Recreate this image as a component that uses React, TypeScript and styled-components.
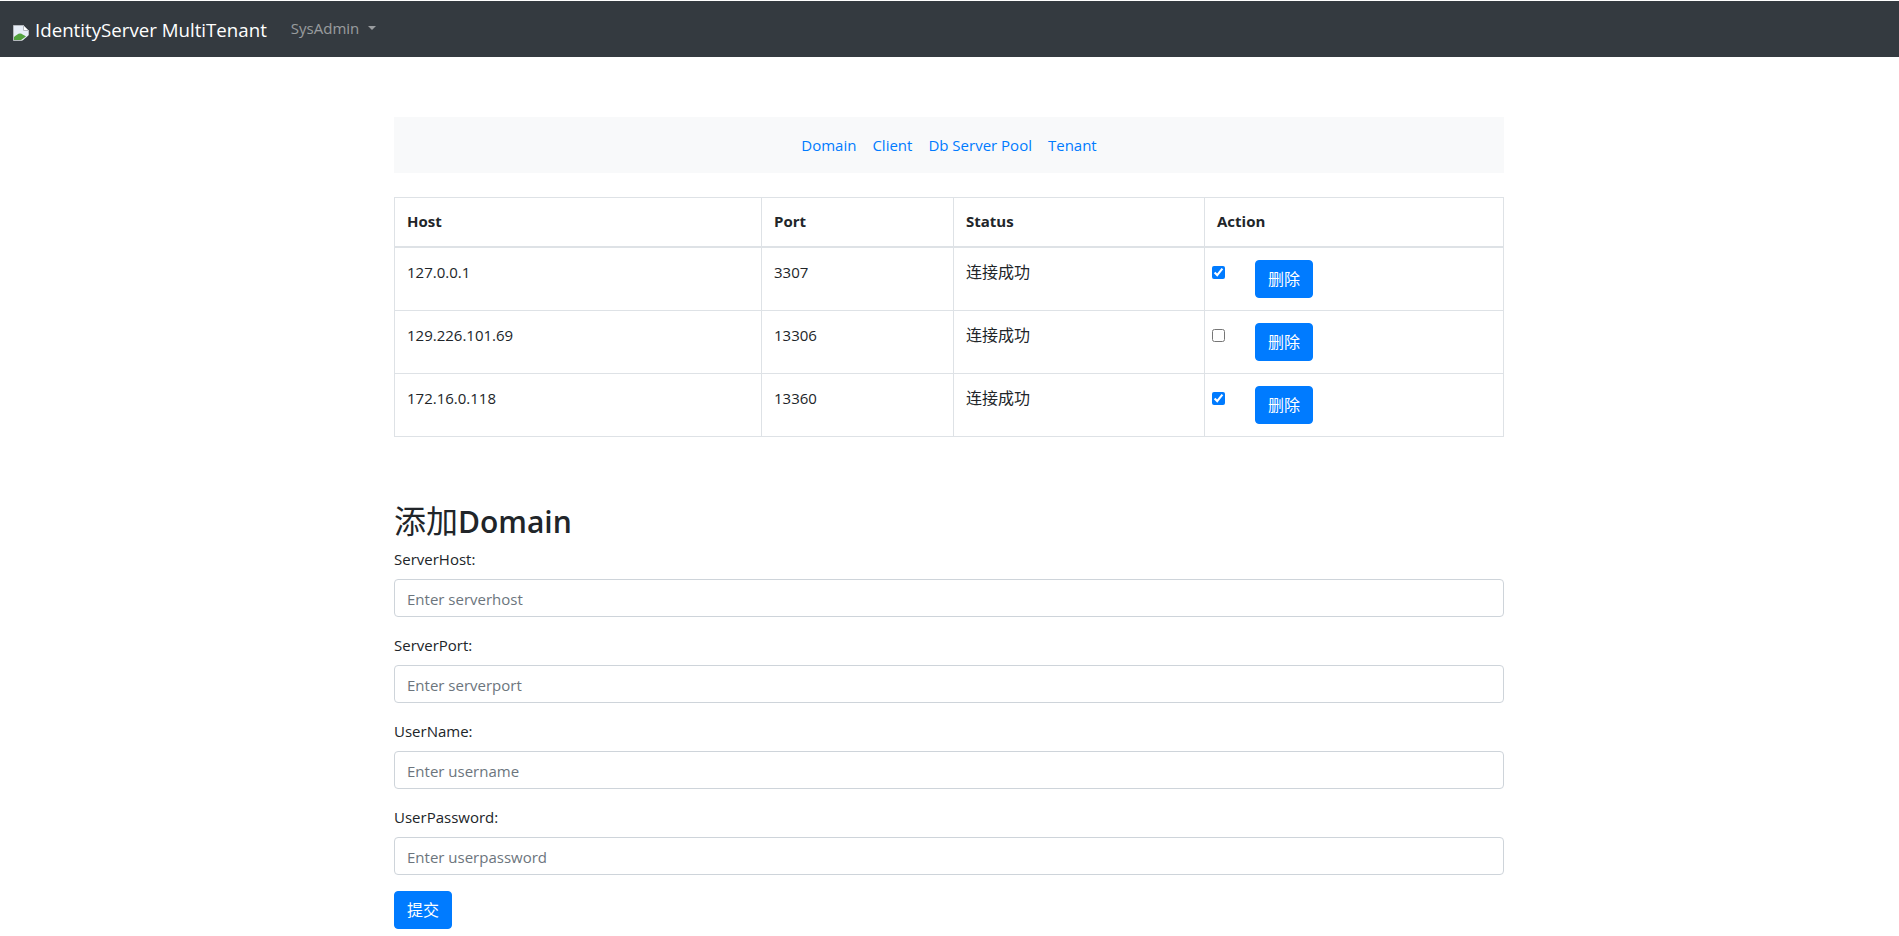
import React from "react";
import styled, { createGlobalStyle } from "styled-components";

const Global = createGlobalStyle`
  * { box-sizing: border-box; }
  html, body { margin: 0; padding: 0; background: #fff; }
  body {
    font-family: "Open Sans", "Noto Sans CJK SC", sans-serif;
    font-size: 15px; line-height: 24px; color: #212529;
  }
`;

const Navbar = styled.nav`
  display: flex; align-items: center; height: 56px; margin-top: 1px;
  background: #343a40; padding: 0 16px 0 13px;
`;
const Brand = styled.a`
  display: flex; align-items: center; color: #fff; font-size: 18.7px; margin-right: 24px; padding-top: 2px;
`;
const BrokenImage = styled.svg`
  width: 16px; height: 16px; margin-right: 6px; margin-top: 6px;
`;
const NavToggle = styled.a`
  display: flex; align-items: center; color: rgba(255,255,255,.5); padding-bottom: 2px;
  &::after {
    content: ""; margin-left: 9px; border-top: 4.8px solid; border-left: 4.8px solid transparent; border-right: 4.8px solid transparent;
  }
`;
const Page = styled.div`
  padding-right: 1px;
`;
const Container = styled.main`
  width: 1110px; margin: 0 auto; padding-top: 60px;
`;
const SubNav = styled.div`
  display: flex; justify-content: center; gap: 16px; height: 56px; align-items: center;
  background: #f8f9fa; margin-bottom: 24px;
`;
const SubLink = styled.a`
  color: #007bff;
`;
const Table = styled.table`
  width: 1109px; table-layout: fixed; border-collapse: collapse; margin-bottom: 65px;
`;
const Col = styled.col<{ $w: number }>`
  width: ${p => p.$w}px;
`;
const Th = styled.th`
  border: 1px solid #dee2e6; border-bottom-width: 2px; padding: 11px 12px 13px; text-align: left; font-weight: 700;
`;
const Td = styled.td`
  border: 1px solid #dee2e6; padding: 12px; vertical-align: top; height: 63px;
`;
const Cjk = styled.span`
  font-size: 16px;
`;
const ActionCell = styled.div`
  display: flex; align-items: flex-start;
`;
const Check = styled.input`
  width: 13px; height: 13px; margin: 6px 30px 0 -5px; accent-color: #007bff;
`;
const Button = styled.button`
  height: 38px; padding: 6px 12px; border: 1px solid #007bff; border-radius: 4px;
  background: #007bff; color: #fff; font: inherit; font-size: 16px; display: block;
`;
const Heading = styled.h2`
  margin: 0 0 6px; font-size: 32px; line-height: 38.4px; font-weight: 400;
`;
const HeadingLatin = styled.span`
  font-size: 30px; font-weight: 600;
`;
const Group = styled.div`
  margin-bottom: 16px;
`;
const Label = styled.label`
  display: block; margin-bottom: 8px;
`;
const Input = styled.input`
  display: block; width: 100%; height: 38px; padding: 7px 12px 5px; border: 1px solid #ced4da; border-radius: 4px;
  font: inherit; color: #495057; background: #fff;
  &::placeholder { color: #6c757d; opacity: 1; }
`;

const rows = [
  { host: "127.0.0.1", port: "3307", on: true },
  { host: "129.226.101.69", port: "13306", on: false },
  { host: "172.16.0.118", port: "13360", on: true },
];
const fields = [
  ["ServerHost:", "Enter serverhost"],
  ["ServerPort:", "Enter serverport"],
  ["UserName:", "Enter username"],
  ["UserPassword:", "Enter userpassword"],
];

export default function App() {
  return (
    <>
      <Global />
      <Navbar>
        <Brand>
          <BrokenImage viewBox="0 0 16 16">
            <path d="M0.5 0.5H10.5L15.5 5.5V15.5H0.5Z" fill="#e6edf7" stroke="#b4b8bd" />
            <path d="M1 15V12C3 10.5 5 8.5 7 8.5C9 8.5 11 10.5 13 11.5L8 15Z" fill="#52a23e" />
            <path d="M10.5 0.5V5.5H15.5Z" fill="#fff" stroke="#b4b8bd" />
            <path d="M9 16L16 10V16Z" fill="#343a40" />
          </BrokenImage>
          IdentityServer MultiTenant
        </Brand>
        <NavToggle>SysAdmin</NavToggle>
      </Navbar>
      <Page>
        <Container>
          <SubNav>
            <SubLink>Domain</SubLink>
            <SubLink>Client</SubLink>
            <SubLink>Db Server Pool</SubLink>
            <SubLink>Tenant</SubLink>
          </SubNav>
          <Table>
            <colgroup>
              <Col $w={367} /><Col $w={192} /><Col $w={251} /><Col $w={299} />
            </colgroup>
            <thead>
              <tr><Th>Host</Th><Th>Port</Th><Th>Status</Th><Th>Action</Th></tr>
            </thead>
            <tbody>
              {rows.map(r => (
                <tr key={r.host}>
                  <Td>{r.host}</Td>
                  <Td>{r.port}</Td>
                  <Td><Cjk>连接成功</Cjk></Td>
                  <Td>
                    <ActionCell>
                      <Check type="checkbox" defaultChecked={r.on} />
                      <Button>删除</Button>
                    </ActionCell>
                  </Td>
                </tr>
              ))}
            </tbody>
          </Table>
          <Heading>添加<HeadingLatin>Domain</HeadingLatin></Heading>
          <form>
            {fields.map(([l, p]) => (
              <Group key={l}>
                <Label>{l}</Label>
                <Input placeholder={p} />
              </Group>
            ))}
            <Button type="button">提交</Button>
          </form>
        </Container>
      </Page>
    </>
  );
}
